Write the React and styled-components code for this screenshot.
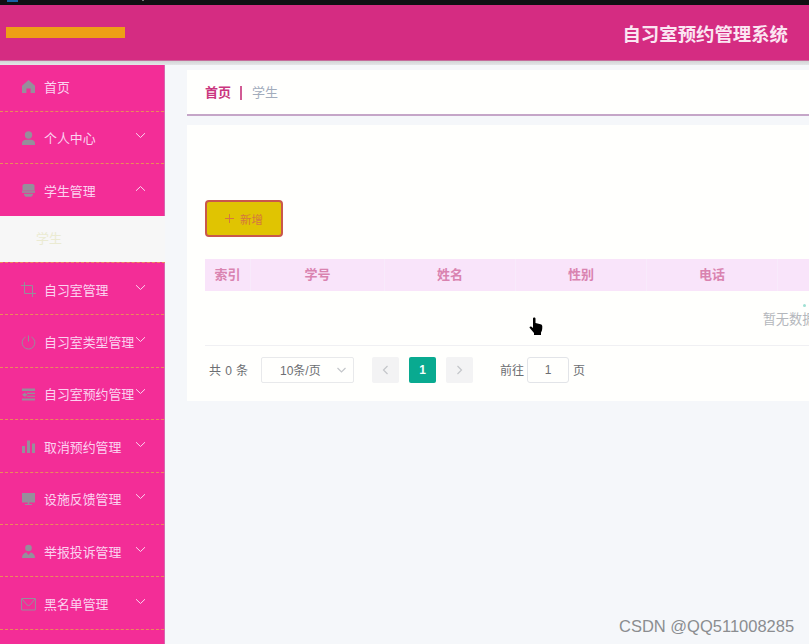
import React from "react";
import styled, { createGlobalStyle } from "styled-components";

const GlobalStyle = createGlobalStyle`
  * {
    box-sizing: border-box;
  }

  body {
    margin: 0;
    overflow: hidden;
    background: #f5f7fa;
    font-family: "Noto Sans CJK SC", sans-serif;
  }
`;

const Page = styled.div`
  position: relative;
  display: flex;
  flex-direction: column;
  width: 100%;
  height: 644px;
  overflow: hidden;
`;

const BrowserEdge = styled.div`
  flex: none;
  display: flex;
  height: 5px;
  padding-left: 7px;
  background: #111013;
`;

const BrowserIcon = styled.span`
  width: 11px;
  height: 2px;
  background: #1761a5;
`;

const BrowserMark = styled.span`
  width: 2px;
  height: 1px;
  margin-left: 124px;
  background: #77777a;
`;

const Header = styled.header`
  flex: none;
  display: flex;
  align-items: center;
  justify-content: space-between;
  height: 56px;
  padding: 0 21px 0 6px;
  background: #d52c82;
  border-bottom: 1px solid #c56b9b;
`;

const Logo = styled.div`
  width: 119px;
  height: 11px;
  background: #ee9f16;
`;

const Title = styled.h1`
  margin: 0;
  color: #fbe6f2;
  font-size: 18.4px;
  font-weight: 700;
  line-height: 26px;
`;

const HeaderShadow = styled.div`
  flex: none;
  height: 4px;
  background: linear-gradient(#d2d4d5, #e4e6e8);
`;

const Body = styled.div`
  flex: 1;
  display: flex;
  min-height: 0;
`;

const Sidebar = styled.nav`
  flex: none;
  width: 165px;
  background: #f32d97;
  border-right: 1px solid #d765ae;
`;

const MenuItem = styled.div`
  display: flex;
  align-items: center;
  height: ${(p) => (p.$first ? 46.6 : 52.4)}px;
  padding: ${(p) => (p.$first ? "0 19px 2px 21px" : "2px 18px 0 21px")};
  border-bottom: 1px ${(p) => (p.$open ? "solid #f32d97" : "dashed #ea8b5a")};
  color: #fbd3f0;
`;

const MenuIcon = styled.svg`
  flex: none;
  width: 15px;
  height: 15px;
  margin-right: 8px;
  color: #968e9b;
`;

const MenuText = styled.span`
  flex: 1;
  min-width: 0;
  font-size: 12.9px;
  line-height: 20px;
  white-space: nowrap;
`;

const MenuArrow = styled.svg`
  flex: none;
  width: 11px;
  height: 7px;
  margin-top: -5px;
  transform: ${(p) => (p.$open ? "rotate(180deg)" : "none")};
`;

const SubMenu = styled.div`
  height: 46.6px;
  margin-right: -1px;
  padding: 12px 36px;
  border-bottom: 1px dashed #ea8b5a;
  background: #f7f7f7;
  background-clip: padding-box;
  color: #ebebd2;
  font-size: 13px;
  line-height: 20px;
`;

const Main = styled.main`
  flex: 1;
  display: flex;
  flex-direction: column;
  gap: 9px;
  min-width: 0;
  padding: 5px 0 0 22px;
`;

const Breadcrumb = styled.div`
  display: flex;
  align-items: center;
  height: 46px;
  padding-left: 18px;
  border-bottom: 2px solid #c5a6c8;
  background: #fffffd;
  font-size: 13px;
  line-height: 20px;
`;

const CrumbHome = styled.span`
  color: #ca367f;
  font-weight: 700;
`;

const CrumbLine = styled.span`
  width: 2px;
  height: 14px;
  margin: 1px 10px 0 9px;
  background: #d15b94;
`;

const CrumbCurrent = styled.span`
  color: #a2acbc;
`;

const Card = styled.section`
  height: 276px;
  padding: 75px 0 0 18px;
  overflow: hidden;
  background: #fffffd;
`;

const AddButton = styled.button`
  display: flex;
  align-items: center;
  justify-content: center;
  gap: 6px;
  width: 78px;
  height: 37px;
  padding: 0;
  border: 2px solid #c9584c;
  border-radius: 4px;
  background: #e0c402;
  color: #d5773f;
  font-family: inherit;
  font-size: 11.5px;
`;

const Table = styled.div`
  width: 1168px;
  margin-top: 22px;
  border-bottom: 1px solid #f0f0f3;
`;

const TableHead = styled.div`
  display: grid;
  grid-template-columns: 46px 134px repeat(3, 131px) 1fr;
  height: 32px;
  background: #f9e4fa;
`;

const HeadCell = styled.div`
  border-right: 1px solid #f8eafb;
  color: #d983b0;
  font-size: 13px;
  font-weight: 700;
  line-height: 30px;
  text-align: center;
`;

const EmptyRow = styled.div`
  position: relative;
  height: 54px;
  color: #b4b7bc;
  font-size: 13.2px;
  line-height: 55px;
  text-align: center;
`;

const LoadingDot = styled.i`
  position: absolute;
  top: 13px;
  left: 598px;
  width: 3px;
  height: 3px;
  border-radius: 50%;
  background: #9fe0d3;
`;

const Pagination = styled.div`
  display: flex;
  align-items: center;
  height: 27px;
  margin-top: 10px;
  padding-left: 4px;
  color: #6c6e72;
  font-family: "Liberation Sans", "Noto Sans CJK SC", sans-serif;
  font-size: 12px;
`;

const Total = styled.span`
  width: 52px;
  letter-spacing: 0.4px;
`;

const PageSize = styled.div`
  display: flex;
  align-items: center;
  justify-content: space-between;
  width: 93px;
  height: 26px;
  margin-right: 18px;
  padding: 0 7px 0 18px;
  border: 1px solid #e8e9eb;
  border-radius: 2px;
`;

const PageButton = styled.button`
  display: flex;
  align-items: center;
  justify-content: center;
  width: 27px;
  height: 26px;
  margin-right: 10px;
  padding: 0;
  border: 0;
  border-radius: 2px;
  background: ${(p) => (p.$active ? "#09aa90" : "#f3f3f4")};
  color: #f4fffc;
  font-family: inherit;
  font-size: 12px;
  font-weight: 700;
`;

const Jump = styled.div`
  display: flex;
  align-items: center;
  margin-left: 17px;
`;

const JumpInput = styled.input`
  width: 42px;
  height: 26px;
  margin: 0 4px 0 3px;
  padding: 0;
  border: 1px solid #e2e4e8;
  border-radius: 3px;
  background: #fffffd;
  color: #6c6e72;
  font: inherit;
  text-align: center;
`;

const Pointer = styled.svg`
  position: absolute;
  top: 317px;
  left: 529px;
  width: 14px;
  height: 18px;
`;

const Watermark = styled.div`
  position: absolute;
  top: 616px;
  left: 619px;
  color: #8b8d90;
  font-family: "Liberation Sans", sans-serif;
  font-size: 16.5px;
  line-height: 20px;
  white-space: nowrap;
`;

const icons = {
  home: <path fill="currentColor" d="M7.5 1 1 6.8V14h4.4V9.6h4.2V14H14V6.8z" />,
  user: (
    <g fill="currentColor">
      <circle cx="7.5" cy="4" r="3.7" />
      <path d="M1 14v-1.8C1 10 2.8 8.8 5 8.8h5c2.2 0 4 1.2 4 3.4V14z" />
    </g>
  ),
  train: (
    <g fill="currentColor">
      <path d="M3 1h9l1.5 1.3V7.5h-12V2.3z" />
      <path d="M1 7.5h13V10H1z" opacity=".85" />
      <path d="M3 10.7h9v1l-1.5 2h-6L3 11.7z" />
    </g>
  ),
  crop: (
    <path
      fill="none"
      stroke="currentColor"
      d="M3.5 0v11.5H15M0 3.5h11.5V15"
    />
  ),
  power: (
    <path
      fill="none"
      stroke="currentColor"
      d="M7.5.5v6M4.5 2a6.4 6.4 0 1 0 6 0"
    />
  ),
  fold: (
    <g fill="currentColor">
      <path d="M1 1.5h13V4H1zM1 11.5h13v2H1zM6 5.8h8v1.1H6zM6 8.7h8v1.1H6z" />
      <path d="m1 7.8 3.5-2.5v1.8H6v1.4H4.5v1.8z" />
    </g>
  ),
  chart: <path fill="currentColor" d="M1 7h3v7H1zM6 1.5h3V14H6zM11 4.5h3V14h-3z" />,
  monitor: <path fill="currentColor" d="M1 1h13v9.5H1zM6.7 10.5h1.6V12H11v1H4v-1h2.7z" />,
  person: (
    <g fill="currentColor">
      <circle cx="7.5" cy="4" r="3.3" />
      <path d="M1 14c0-3 1.4-4.8 4.2-5.8L7.5 11l2.3-2.8C12.6 9.2 14 11 14 14z" />
    </g>
  ),
  mail: (
    <path
      fill="none"
      stroke="currentColor"
      d="M.6 1.5h13.8v11.5H.6zM1 1.8l4.8 6q1.7 1.6 3.4 0L14 1.8"
    />
  ),
};

const menus = [
  { icon: "home", text: "首页", first: true },
  { icon: "user", text: "个人中心" },
  { icon: "train", text: "学生管理", open: true, children: ["学生"] },
  { icon: "crop", text: "自习室管理" },
  { icon: "power", text: "自习室类型管理" },
  { icon: "fold", text: "自习室预约管理" },
  { icon: "chart", text: "取消预约管理" },
  { icon: "monitor", text: "设施反馈管理" },
  { icon: "person", text: "举报投诉管理" },
  { icon: "mail", text: "黑名单管理" },
];

const columns = ["索引", "学号", "姓名", "性别", "电话", ""];

function Arrow({ open }) {
  return (
    <MenuArrow $open={open} viewBox="0 0 11 7">
      <path d="m1 1.2 4.5 4.3L10 1.2" fill="none" stroke="currentColor" />
    </MenuArrow>
  );
}

function Chevron({ d }) {
  return (
    <svg width="9" height="10" viewBox="0 0 9 10">
      <path d={d} fill="none" stroke="#c4c6ca" strokeWidth="1.2" />
    </svg>
  );
}

function Menu() {
  return (
    <Sidebar>
      {menus.map((item) => (
        <React.Fragment key={item.text}>
          <MenuItem $first={item.first} $open={item.open}>
            <MenuIcon viewBox="0 0 15 15">{icons[item.icon]}</MenuIcon>
            <MenuText>{item.text}</MenuText>
            {!item.first && <Arrow open={item.open} />}
          </MenuItem>
          {item.children && item.children.map((child) => <SubMenu key={child}>{child}</SubMenu>)}
        </React.Fragment>
      ))}
    </Sidebar>
  );
}

export default function App() {
  return (
    <Page>
      <GlobalStyle />
      <BrowserEdge>
        <BrowserIcon />
        <BrowserMark />
      </BrowserEdge>
      <Header>
        <Logo />
        <Title>自习室预约管理系统</Title>
      </Header>
      <HeaderShadow />
      <Body>
        <Menu />
        <Main>
          <Breadcrumb>
            <CrumbHome>首页</CrumbHome>
            <CrumbLine />
            <CrumbCurrent>学生</CrumbCurrent>
          </Breadcrumb>
          <Card>
            <AddButton>
              <svg width="9" height="9" viewBox="0 0 9 9">
                <path d="M4.5 0v9M0 4.5h9" stroke="currentColor" />
              </svg>
              新增
            </AddButton>
            <Table>
              <TableHead>
                {columns.map((name) => (
                  <HeadCell key={name}>{name}</HeadCell>
                ))}
              </TableHead>
              <EmptyRow>
                <LoadingDot />
                暂无数据
              </EmptyRow>
            </Table>
            <Pagination>
              <Total>共 0 条</Total>
              <PageSize>
                10条/页
                <Chevron d="m.5 3 4 4 4-4" />
              </PageSize>
              <PageButton>
                <Chevron d="M6.5 1 2.5 5l4 4" />
              </PageButton>
              <PageButton $active>1</PageButton>
              <PageButton>
                <Chevron d="m2.5 1 4 4-4 4" />
              </PageButton>
              <Jump>
                前往
                <JumpInput defaultValue="1" />
                页
              </Jump>
            </Pagination>
          </Card>
        </Main>
      </Body>
      <Pointer viewBox="0 0 14 18">
        <path d="M4 1.5C4 0 6.5 0 6.5 1.5V6l5 1.2c1.2.3 1.8 1 1.8 2.2 0 3-.3 4.5-1.3 6V18H5v-2L.8 11C0 9.8 1.5 8.8 2.5 9.8L4 11z" />
      </Pointer>
      <Watermark>CSDN @QQ511008285</Watermark>
    </Page>
  );
}
